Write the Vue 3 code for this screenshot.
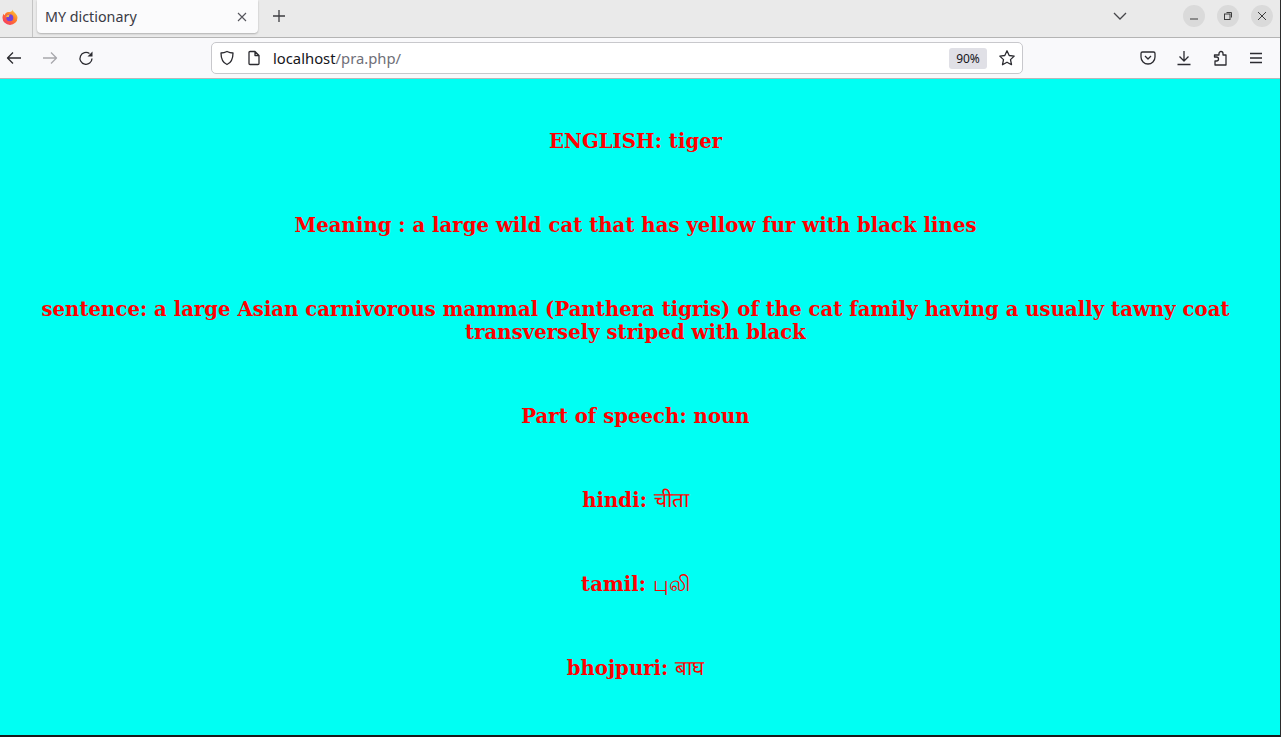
<script setup>
const entries = [
  { label: 'ENGLISH: tiger', value: '' },
  { label: 'Meaning : a large wild cat that has yellow fur with black lines', value: '' },
  { label: 'sentence: a large Asian carnivorous mammal (Panthera tigris) of the cat family having a usually tawny coat transversely striped with black', value: '' },
  { label: 'Part of speech: noun', value: '' },
  { label: 'hindi: ', value: 'चीता' },
  { label: 'tamil: ', value: 'புலி' },
  { label: 'bhojpuri: ', value: 'बाघ' },
]
</script>

<template>
  <div class="window">
    <div class="tabbar">
      <div class="pinned">
        <svg class="ff" width="16" height="16" viewBox="0 0 16 16">
          <defs>
            <linearGradient id="ffg" x1="0.9" y1="0" x2="0.1" y2="1">
              <stop offset="0" stop-color="#ffd53a" />
              <stop offset="0.45" stop-color="#ff7a2a" />
              <stop offset="1" stop-color="#f5306a" />
            </linearGradient>
          </defs>
          <path d="M10.500.5c.2 1.600 1.300 2.300 2.300 3.200 1.700 1.400 2.700 3.300 2.700 5a7.500 7.300 0 0 1-15 0c0-1.500.5-3 1.300-4 .1.800.4 1.300.9 1.600C3 4.500 4.500 3 6.500 3 8.500 3 10.500 2.500 10.500.5z" fill="url(#ffg)" />
          <circle cx="7.800" cy="8.700" r="3.500" fill="#7443d8" />
          <path d="M4 8.500C4.500 6 6.500 5.300 8.500 5.600 7 6.300 6.600 7.300 7 8.200 5.800 8 4.800 8.200 4 8.500z" fill="#ffc23a" />
        </svg>
      </div>
      <div class="tab">
        <span class="tab-title">MY dictionary</span>
        <svg class="tab-x" width="12" height="12" viewBox="0 0 12 12"><path d="M2 2l8 8M10 2l-8 8" /></svg>
      </div>
      <svg class="plus" width="14" height="14" viewBox="0 0 14 14"><path d="M7 1v12M1 7h12" /></svg>
      <div class="grow"></div>
      <svg class="chev" width="14" height="8" viewBox="0 0 14 8"><path d="M1 1l6 6 6-6" /></svg>
      <div class="winbtns">
        <span class="winbtn"><svg width="10" height="10" viewBox="0 0 10 10"><path d="M1 8h8" /></svg></span>
        <span class="winbtn"><svg width="10" height="10" viewBox="0 0 10 10"><rect x="1.500" y="3" width="5.500" height="5.500" /><path d="M3.500 1.500h5v5" /></svg></span>
        <span class="winbtn"><svg width="10" height="10" viewBox="0 0 10 10"><path d="M1 1l8 8M9 1l-8 8" /></svg></span>
      </div>
    </div>

    <div class="toolbar">
      <svg class="ico back" width="16" height="16" viewBox="0 0 16 16"><path d="M15 8H1.500M7 2.500L1.500 8 7 13.500" /></svg>
      <svg class="ico fwd" width="16" height="16" viewBox="0 0 16 16"><path d="M1 8h13.500M9 2.500L14.500 8 9 13.500" /></svg>
      <svg class="ico reload" width="16" height="16" viewBox="0 0 16 16"><path d="M14 8.500a6 6 0 1 1-2.500-5" /><path class="solid" d="M14.500 1.500v5h-5z" /></svg>
      <div class="urlbar">
        <svg class="ico shield" width="16" height="16" viewBox="0 0 16 16"><path d="M8 1.500c2 1 4 1.500 6 1.500 0 5-1 9.500-6 11.500C3 12.500 2 8 2 3c2 0 4-.5 6-1.500z" /></svg>
        <svg class="ico doc" width="14" height="16" viewBox="0 0 14 16"><path d="M2 2.500a1 1 0 0 1 1-1h5l4 4v8a1 1 0 0 1-1 1H3a1 1 0 0 1-1-1zM8 1.500v4h4" /></svg>
        <span class="url"><span class="host">localhost</span><span class="path">/pra.php/</span></span>
        <div class="grow"></div>
        <span class="zoom">90%</span>
        <svg class="ico star" width="18" height="18" viewBox="0 0 18 18"><path d="M9 1.800l2.200 4.700 5 .6-3.700 3.500 1 5.100L9 13.200l-4.500 2.500 1-5.100L1.800 7.100l5-.6z" /></svg>
      </div>
      <div class="grow"></div>
      <div class="tools">
        <svg class="ico" width="16" height="16" viewBox="0 0 16 16"><path d="M2.500 2h11A1.500 1.500 0 0 1 15 3.500V7a7 7 0 0 1-14 0V3.500A1.500 1.500 0 0 1 2.500 2zM5 6l3 3 3-3" /></svg>
        <svg class="ico" width="16" height="16" viewBox="0 0 16 16"><path d="M8 1v10M3.500 6.500L8 11l4.500-4.500M1.500 14.500h13" /></svg>
        <svg class="ico" width="16" height="16" viewBox="0 0 16 16"><path d="M3 15v-4h1.500a2 2 0 0 0 0-4H2.500V5H7V3.500a2 2 0 0 1 4 0V5h3v10z" /></svg>
        <svg class="ico" width="16" height="16" viewBox="0 0 16 16"><path d="M2 3.500h12M2 8h12M2 12.500h12" /></svg>
      </div>
    </div>

    <main class="content">
      <h2 v-for="e in entries" :key="e.label" class="entry">{{ e.label }}<span v-if="e.value" class="val">{{ e.value }}</span></h2>
    </main>
  </div>
</template>

<style>
html, body { margin: 0; padding: 0; overflow: hidden; }
</style>

<style scoped>
.window {
  width: 1281px;
  height: 737px;
  box-sizing: border-box;
  border-right: 1px solid #2c2c2c;
  display: flex;
  flex-direction: column;
  font-family: "Noto Sans", "Open Sans", sans-serif;
  background: #00fff3;
  overflow: hidden;
}
.grow { flex: 1; }
.tabbar {
  height: 37px;
  flex: none;
  display: flex;
  align-items: flex-start;
  background: #eaeaea;
  border-bottom: 1px solid #b4b4b4;
}
.pinned {
  width: 33px;
  height: 37px;
  box-sizing: border-box;
  border-right: 1px solid #c4c4c4;
  display: flex;
  align-items: center;
  padding-left: 2px;
}
.ff { margin-top: -4px; }
.tab {
  width: 221px;
  height: 33px;
  margin-left: 4px;
  box-sizing: border-box;
  padding: 0 10px 0 8px;
  display: flex;
  align-items: center;
  justify-content: space-between;
  background: #fbfbfc;
  border-radius: 0 0 4px 4px;
  box-shadow: 0 1px 2px rgba(0, 0, 0, .25);
}
.tab-title { font-size: 14.300px; color: #3a3a44; }
.tab-x path { stroke: #55555c; stroke-width: 1.100; fill: none; }
.plus { margin: 9px 0 0 14px; }
.plus path { stroke: #3c3c40; stroke-width: 1.300; fill: none; }
.chev { margin: 12px 56px 0 0; }
.chev path { stroke: #46464a; stroke-width: 1.300; fill: none; }
.winbtns { display: flex; gap: 12px; margin: 5px 7px 0 0; }
.winbtn {
  width: 22px;
  height: 22px;
  border-radius: 50%;
  background: #dadada;
  display: flex;
  align-items: center;
  justify-content: center;
}
.winbtn svg * { stroke: #3c3c3c; stroke-width: 1; fill: none; }
.toolbar {
  height: 40px;
  flex: none;
  display: flex;
  align-items: center;
  padding-left: 6px;
  background: #f9f9fb;
  border-bottom: 1px solid #b8b8b8;
}
.ico { flex: none; }
.ico * { stroke: #2b2b30; stroke-width: 1.300; fill: none; stroke-linejoin: round; }
.ico .solid { fill: #2b2b30; stroke: none; }
.fwd { margin-left: 20px; }
.fwd * { stroke: #a8a8ac; }
.reload { margin-left: 20px; }
.urlbar {
  width: 812px;
  height: 32px;
  margin-left: 117px;
  box-sizing: border-box;
  display: flex;
  align-items: center;
  padding: 0 6px 0 7px;
  background: #fff;
  border: 1px solid #c8c8cc;
  border-radius: 5px;
}
.doc { margin-left: 12px; }
.url { font-size: 14.800px; margin-left: 12px; white-space: nowrap; }
.host { color: #15141a; }
.path { color: #6f6f78; }
.zoom {
  width: 38px;
  height: 21px;
  border-radius: 3px;
  background: #e0e0e6;
  font-size: 12px;
  color: #15141a;
  display: flex;
  align-items: center;
  justify-content: center;
}
.star { margin-left: 11px; }
.tools { display: flex; gap: 20px; margin-right: 16px; }
.content {
  flex: 1;
  background: #00fff3;
  border-bottom: 2px solid #1a1a1a;
  padding-top: 51px;
  box-sizing: border-box;
  display: flex;
  flex-direction: column;
  gap: 61.090px;
  min-height: 0;
}
.entry {
  margin: 0;
  padding: 0 17px 0 8px;
  text-align: center;
  color: #ff0000;
  font-family: "DejaVu Serif", serif;
  font-size: 19.720px;
  font-weight: bold;
  line-height: 23px;
  white-space: pre-wrap;
}
.val { font-weight: normal; font-size: 20.700px; line-height: 0; }
</style>
